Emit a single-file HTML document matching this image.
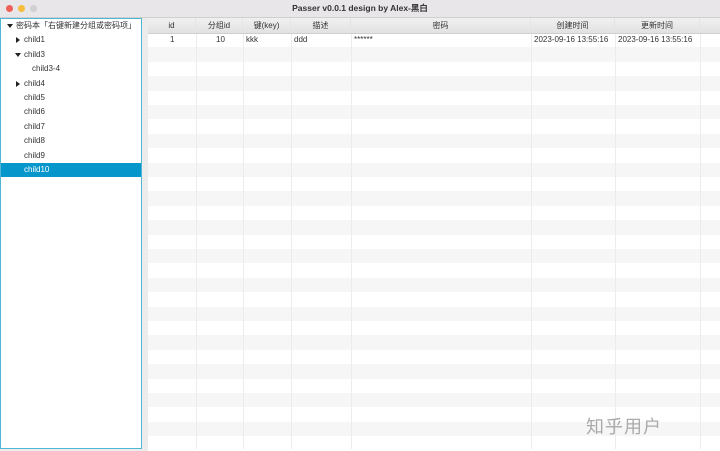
<!DOCTYPE html><html><head><meta charset="utf-8"><style>
body{margin:0;width:720px;height:449px;overflow:hidden;background:#ececec;font-family:"Liberation Sans","Noto Sans CJK SC",sans-serif;font-size:8px;color:#333;position:relative}
.tb{position:absolute;left:0;top:0;width:720px;height:17px;background:#e8e6e8;border-bottom:1px solid #cfcfcf;text-align:center;font-weight:bold;font-size:8.5px;line-height:17px;color:#333}
.d{position:absolute;top:5px;width:7px;height:7px;border-radius:50%}
.tree{position:absolute;left:0;top:18px;width:142px;height:431px;background:#fff;border:1px solid #4fb6d3;box-sizing:border-box}
.it{position:absolute;left:0;width:140px;height:14.4px;line-height:14.4px}
.sel{background:#0596cc;color:#fff}
.down{position:absolute;top:5px;width:0;height:0;border-left:3px solid transparent;border-right:3px solid transparent;border-top:4px solid #222}
.right{position:absolute;top:4px;width:0;height:0;border-top:3px solid transparent;border-bottom:3px solid transparent;border-left:4px solid #222}
.tbl{position:absolute;left:148px;top:18px;width:572px;height:431px;background:#fff}
.hd{position:absolute;left:0;top:0;height:15px;width:572px;background:linear-gradient(#f0f0f0,#e2e2e2);border-bottom:1px solid #cfcfcf}
.c{position:absolute;top:0;height:100%;border-right:1px solid #e4e4e4;box-sizing:border-box;text-align:center;line-height:15px}
</style></head><body>
<div class="tb">Passer v0.0.1 design by Alex-黑白
<div class="d" style="left:6px;background:#ee5f58"></div><div class="d" style="left:18px;background:#f6bd3b"></div><div class="d" style="left:30px;background:#d0d0d0"></div></div>
<div class="tree">
<div class="it" style="top:0"><span class="down" style="left:6px"></span><span style="position:absolute;left:15px">密码本「右键新建分组或密码项」</span></div>
<div class="it" style="top:14.4px"><span class="right" style="left:15px"></span><span style="position:absolute;left:23px">child1</span></div>
<div class="it" style="top:28.8px"><span class="down" style="left:14px"></span><span style="position:absolute;left:23px">child3</span></div>
<div class="it" style="top:43.2px"><span style="position:absolute;left:31px">child3-4</span></div>
<div class="it" style="top:57.6px"><span class="right" style="left:15px"></span><span style="position:absolute;left:23px">child4</span></div>
<div class="it" style="top:72px"><span style="position:absolute;left:23px">child5</span></div>
<div class="it" style="top:86.4px"><span style="position:absolute;left:23px">child6</span></div>
<div class="it" style="top:100.8px"><span style="position:absolute;left:23px">child7</span></div>
<div class="it" style="top:115.2px"><span style="position:absolute;left:23px">child8</span></div>
<div class="it" style="top:129.6px"><span style="position:absolute;left:23px">child9</span></div>
<div class="it sel" style="top:144px"><span style="position:absolute;left:23px">child10</span></div>
</div>
<div class="tbl">
<div id="rows"></div>
<div class="hd">
<div class="c" style="left:0;width:48px">id</div><div class="c" style="left:48px;width:47px">分组id</div><div class="c" style="left:95px;width:48px">键(key)</div><div class="c" style="left:143px;width:60px">描述</div><div class="c" style="left:203px;width:180px">密码</div><div class="c" style="left:383px;width:84px">创建时间</div><div class="c" style="left:467px;width:85px">更新时间</div>
</div>
<div style="position:absolute;top:15px;left:0;width:572px;height:14.4px;line-height:14.4px">
<span style="position:absolute;left:22px">1</span><span style="position:absolute;left:68px">10</span><span style="position:absolute;left:98px">kkk</span><span style="position:absolute;left:146px">ddd</span><span style="position:absolute;left:206px">******</span><span style="position:absolute;left:386px">2023-09-16 13:55:16</span><span style="position:absolute;left:470px">2023-09-16 13:55:16</span></div>
<div style="position:absolute;left:438px;top:395px;font-size:18px;color:#aaa;letter-spacing:1px">知乎用户</div>
</div>
<script>
var r='';for(var i=0;i<29;i++){r+='<div style="position:absolute;left:0;width:572px;height:14.4px;top:'+(15+i*14.4)+'px;background:'+(i%2?'#f6f6f6':'#fff')+'"></div>';}
[48,95,143,203,383,467,552].forEach(function(x){r+='<div style="position:absolute;top:15px;bottom:0;left:'+x+'px;border-left:1px solid #ececec"></div>'});
document.getElementById('rows').innerHTML=r;
</script>
</body></html>
